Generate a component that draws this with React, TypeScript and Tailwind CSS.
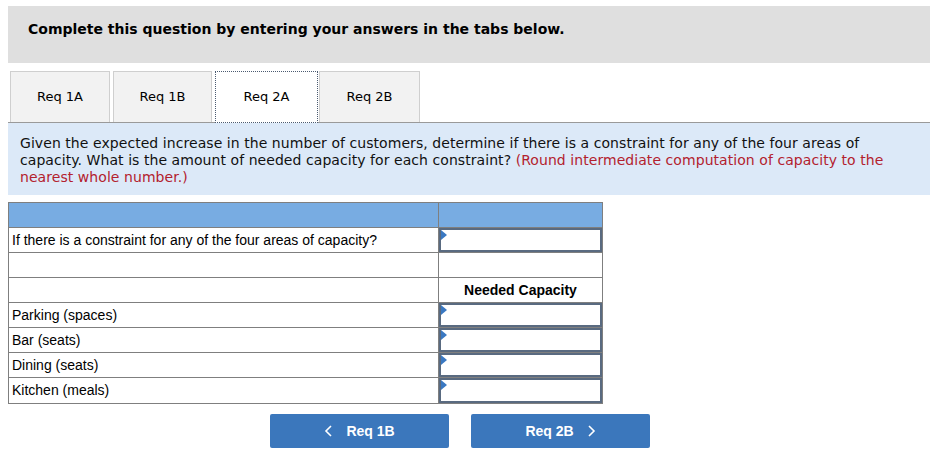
import React from "react";

const Tri = () => (
  <span className="absolute left-0 top-0 w-0 h-0 border-t-[5px] border-b-[5px] border-l-[6px] border-t-transparent border-b-transparent border-l-[#3a78c2]" />
);

const Row = ({
  left,
  right,
  input,
  header,
}: {
  left?: string;
  right?: string;
  input?: boolean;
  header?: boolean;
}) => (
  <div className={`flex h-[25px] border-b border-[#7f7f7f] last:border-b-0 ${header ? "bg-[#78ace2]" : "bg-white"}`}>
    <div className="w-[430px] border-r border-[#7f7f7f] px-[3px] flex items-center">{left}</div>
    <div className="flex-1 flex items-center justify-center font-bold">
      {input ? (
        <div className="relative w-full h-full border-2 border-[#596a80] bg-white">
          <Tri />
        </div>
      ) : (
        right
      )}
    </div>
  </div>
);

export default function App() {
  const verdana = { fontFamily: '"DejaVu Sans", Verdana, sans-serif' };
  const arial = { fontFamily: '"Liberation Sans", Arial, sans-serif' };
  return (
    <div className="w-[936px] h-[470px] bg-white pt-[6px] pl-[8px] pr-[6px] overflow-hidden">
      <div className="h-[57px] bg-[#dfdfdf] pl-[20px] pt-[11px]" style={verdana}>
        <span className="text-[14px] font-bold text-black">
          Complete this question by entering your answers in the tabs below.
        </span>
      </div>
      <div className="mt-[8px] flex pl-[2px] h-[51px]" style={verdana}>
        <div className="w-[100px] h-[51px] bg-[#f2f2f2] border border-[#cfcfcf] border-b-0 flex items-center justify-center text-[13px] text-black">
          Req 1A
        </div>
        <div className="ml-[3px] w-[99px] h-[51px] bg-[#f2f2f2] border border-[#cfcfcf] border-b-0 flex items-center justify-center text-[13px] text-black">
          Req 1B
        </div>
        <div className="ml-[3px] w-[103px] h-[52px] bg-white border border-dotted border-[#4a5a70] flex items-center justify-center text-[13px] text-black relative z-10">
          Req 2A
        </div>
        <div className="ml-[1px] w-[101px] h-[51px] bg-[#f2f2f2] border border-[#cfcfcf] border-b-0 flex items-center justify-center text-[13px] text-black">
          Req 2B
        </div>
      </div>
      <div
        className="border-t border-[#9a9a9a] bg-[#dce9f8] h-[73px] pl-[12px] pr-[30px] pt-[12px] text-[14px] leading-[17px] text-[#111] tracking-[0.06px]"
        style={verdana}
      >
        Given the expected increase in the number of customers, determine if there is a constraint for any of the four areas of capacity. What is the amount of needed capacity for each constraint?{" "}
        <span className="text-[#b3212e]">(Round intermediate computation of capacity to the nearest whole number.)</span>
      </div>
      <div className="mt-[7px] w-[595px] border border-[#7f7f7f] text-[14px] text-black" style={arial}>
        <Row header />
        <Row left="If there is a constraint for any of the four areas of capacity?" input />
        <Row />
        <Row right="Needed Capacity" />
        <Row left="Parking (spaces)" input />
        <Row left="Bar (seats)" input />
        <Row left="Dining (seats)" input />
        <Row left="Kitchen (meals)" input />
      </div>
      <div className="mt-[10px] flex gap-[22px] pl-[262px]" style={arial}>
        <div className="w-[179px] h-[34px] bg-[#3b77bc] rounded-[2px] flex items-center justify-center text-white text-[14px] font-bold">
          <span className="mr-[13px]">
            <svg width="9" height="12" viewBox="0 0 9 12"><path d="M7 1 L2 6 L7 11" fill="none" stroke="white" strokeWidth="1.6" /></svg>
          </span>
          Req 1B
        </div>
        <div className="w-[179px] h-[34px] bg-[#3b77bc] rounded-[2px] flex items-center justify-center text-white text-[14px] font-bold">
          Req 2B
          <span className="ml-[13px]">
            <svg width="9" height="12" viewBox="0 0 9 12"><path d="M2 1 L7 6 L2 11" fill="none" stroke="white" strokeWidth="1.6" /></svg>
          </span>
        </div>
      </div>
    </div>
  );
}
